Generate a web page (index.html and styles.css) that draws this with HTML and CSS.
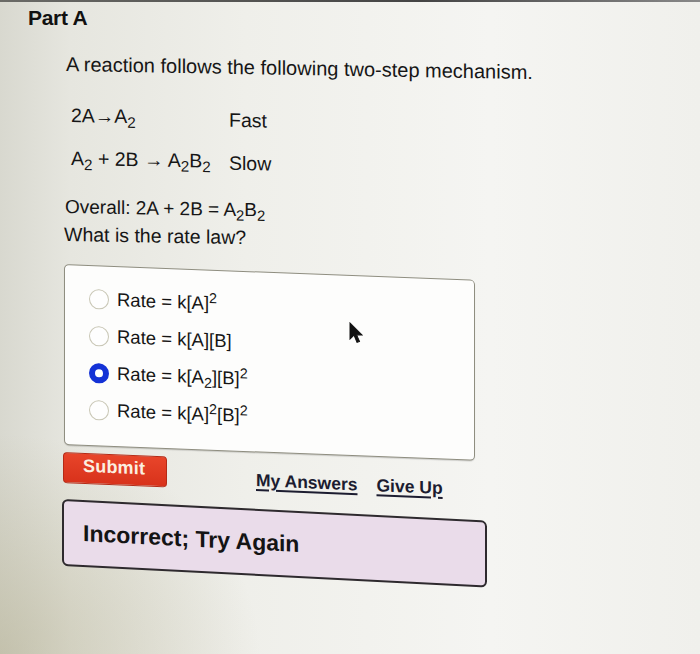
FILE: index.html
```html
<!DOCTYPE html>
<html>
<head>
<meta charset="utf-8">
<link rel="stylesheet" href="styles.css">
</head>
<body>
<div class="screen">
  <div class="topline"></div>
  <h1 class="part">Part A</h1>
  <div class="question">
    <p class="intro">A reaction follows the following two-step mechanism.</p>
    <div class="mech">
      <div class="eq">2A→A<sub>2</sub></div><div class="speed">Fast</div>
      <div class="eq">A<sub>2</sub> + 2B → A<sub>2</sub>B<sub>2</sub></div><div class="speed">Slow</div>
    </div>
    <p class="overall">Overall: 2A + 2B = A<sub>2</sub>B<sub>2</sub></p>
    <p class="ask">What is the rate law?</p>
  </div>
  <div class="answers">
    <label class="opt"><span class="radio"></span><span>Rate = k[A]<sup>2</sup></span></label>
    <label class="opt"><span class="radio"></span><span>Rate = k[A][B]</span></label>
    <label class="opt"><span class="radio on"></span><span>Rate = k[A<sub>2</sub>][B]<sup>2</sup></span></label>
    <label class="opt"><span class="radio"></span><span>Rate = k[A]<sup>2</sup>[B]<sup>2</sup></span></label>
    <svg class="cursor" width="14" height="22" viewBox="0 0 14 22"><path d="M1 1 L1 17 L5 13 L8 20 L10.5 19 L7.5 12.5 L13 12.5 Z" fill="#111" stroke="#111" stroke-width="1"/></svg>
  </div>
  <div class="actions">
    <button class="submit">Submit</button>
    <a class="link my">My Answers</a>
    <a class="link give">Give Up</a>
  </div>
  <div class="feedback">Incorrect; Try Again</div>
</div>
</body>
</html>
```

FILE: styles.css
```css
html, body {
  margin: 0;
  padding: 0;
}
body {
  width: 700px;
  height: 654px;
  overflow: hidden;
  font-family: "Liberation Sans", Arial, sans-serif;
  color: #1a1a1a;
  background:
    radial-gradient(ellipse 260px 220px at 0 654px, rgba(170,165,130,0.45), rgba(170,165,130,0) 100%),
    linear-gradient(to right, #d8d8cf 0, #e6e6df 10%, #efefea 35%, #f5f5f2 70%, #f0f0ec 100%);
}
.screen {
  position: relative;
  height: 654px;
}
.topline {
  height: 2px;
  background: linear-gradient(to right, #6a6a66, #444 60%, #888 100%);
}
.part {
  margin: 0;
  padding: 4px 0 0 28px;
  font-size: 21px;
  line-height: 24px;
  font-weight: bold;
  color: #111;
  letter-spacing: -0.3px;
}
.question {
  margin-left: 66px;
  transform: skewY(1deg);
  transform-origin: 0 0;
  color: #161616;
}
.intro {
  margin: 22px 0 0;
  font-size: 20px;
  line-height: 24px;
}
.mech {
  display: grid;
  grid-template-columns: 158px auto;
  row-gap: 19px;
  margin: 28px 0 0 5px;
  font-size: 19.5px;
  line-height: 22px;
}
.mech .speed {
  margin-top: 2px;
}
sub {
  font-size: 0.78em;
  vertical-align: -0.3em;
  line-height: 0;
}
sup {
  font-size: 0.78em;
  vertical-align: 0.45em;
  line-height: 0;
}
.overall {
  margin: 25px 0 0 -1px;
  font-size: 19px;
  line-height: 22px;
}
.ask {
  margin: 5px 0 0 -2px;
  font-size: 19.5px;
  line-height: 22px;
}
.answers {
  position: relative;
  box-sizing: border-box;
  margin: 19px 0 0 64px;
  width: 411px;
  height: 181px;
  background: #fdfdfc;
  border: 1.5px solid #8f8e80;
  border-radius: 5px;
  box-shadow: 0 1px 1px rgba(0,0,0,0.15);
  padding: 21px 0 0 24px;
  display: flex;
  flex-direction: column;
  gap: 14px;
  transform: skewY(2.2deg);
  transform-origin: 0 0;
}
.opt {
  display: flex;
  align-items: center;
  gap: 8px;
  font-size: 18.5px;
  line-height: 23px;
  color: #151515;
}
.radio {
  box-sizing: border-box;
  width: 20px;
  height: 20px;
  border-radius: 50%;
  border: 1.5px solid #c9c7b6;
  background: #fefefe;
  flex: none;
}
.radio.on {
  border: 6px solid #1432d6;
  background: #fff;
}
.cursor {
  position: absolute;
  left: 284px;
  top: 46px;
}
.actions {
  display: flex;
  align-items: flex-start;
  margin: 7px 0 0 63px;
  transform: skewY(2.4deg);
  transform-origin: 0 0;
}
.submit {
  box-sizing: border-box;
  width: 104px;
  height: 31px;
  background: linear-gradient(#e8452a, #d8321b);
  border: 1px solid #b52a16;
  border-radius: 4px;
  color: #fbefe0;
  font-family: "Liberation Sans", Arial, sans-serif;
  font-weight: bold;
  font-size: 18px;
  text-align: left;
  padding: 0 0 4px 19px;
  letter-spacing: 0.2px;
}
.link {
  font-weight: bold;
  font-size: 17.5px;
  line-height: 20px;
  color: #1c1c30;
  text-decoration: underline;
  text-underline-offset: 3px;
  text-decoration-thickness: 1.5px;
}
.my {
  margin: 10px 0 0 89px;
}
.give {
  margin: 10px 0 0 19px;
}
.feedback {
  box-sizing: border-box;
  margin: 16px 0 0 62px;
  width: 425px;
  height: 67px;
  background: #eadcea;
  border: 2px solid #2e2a2e;
  border-radius: 6px;
  padding: 18px 0 0 19px;
  font-weight: bold;
  font-size: 23px;
  line-height: 26px;
  color: #141414;
  transform: skewY(2.9deg);
  transform-origin: 0 0;
}
```
